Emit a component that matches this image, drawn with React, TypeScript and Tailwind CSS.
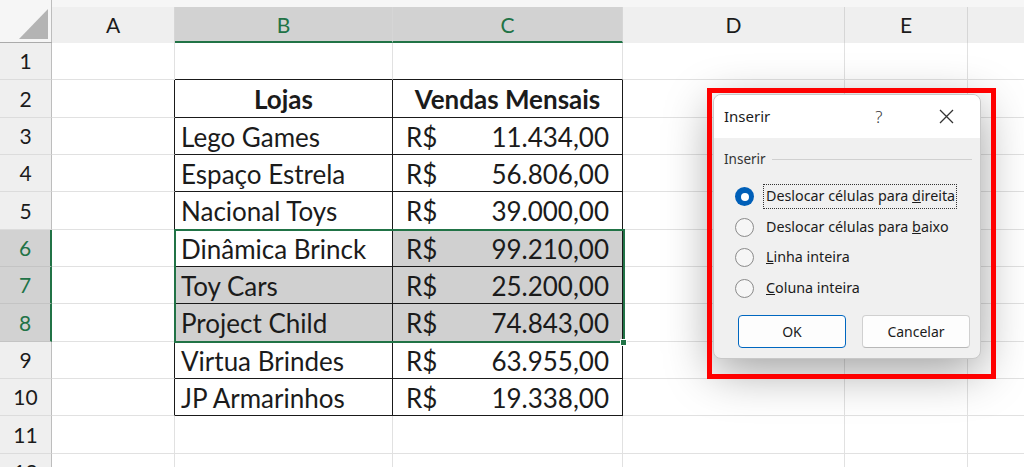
import React from "react";

const cols = [
  { k: "A", w: 123 },
  { k: "B", w: 218 },
  { k: "C", w: 230 },
  { k: "D", w: 222 },
  { k: "E", w: 123 },
  { k: "F", w: 100 },
];

const data: Record<number, [string, string]> = {
  3: ["Lego Games", "11.434,00"],
  4: ["Espaço Estrela", "56.806,00"],
  5: ["Nacional Toys", "39.000,00"],
  6: ["Dinâmica Brinck", "99.210,00"],
  7: ["Toy Cars", "25.200,00"],
  8: ["Project Child", "74.843,00"],
  9: ["Virtua Brindes", "63.955,00"],
  10: ["JP Armarinhos", "19.338,00"],
};

const rows = Array.from({ length: 12 }, (_, i) => i + 1);

function Cell({ r, c, w }: { r: number; c: string; w: number }) {
  const inTable = r >= 2 && r <= 10;
  const rightBlack = inTable && (c === "A" || c === "B" || c === "C");
  const bottomBlack = r >= 1 && r <= 10 && (c === "B" || c === "C");
  const selGray = (r === 7 || r === 8) && c === "B" ? true : r >= 6 && r <= 8 && c === "C";
  const cls = [
    "shrink-0 h-full border-r border-b flex items-center leading-none pt-[2px]",
    rightBlack ? "border-r-[#1a1a1a]" : "border-r-[#e1e1e1]",
    bottomBlack ? "border-b-[#1a1a1a]" : "border-b-[#e1e1e1]",
    selGray ? "bg-[#d0d0d0]" : "bg-white",
  ].join(" ");
  let content: React.ReactNode = null;
  if (r === 2 && c === "B") content = <span className="w-full text-center font-bold">Lojas</span>;
  if (r === 2 && c === "C") content = <span className="w-full text-center font-bold">Vendas Mensais</span>;
  if (data[r] && c === "B") content = <span className="pl-[6px]">{data[r][0]}</span>;
  if (data[r] && c === "C")
    content = (
      <div className="w-full flex justify-between pl-[13px] pr-[13px]">
        <span>R$</span>
        <span>{data[r][1]}</span>
      </div>
    );
  return (
    <div className={cls} style={{ width: w }}>
      {content}
    </div>
  );
}

function Radio({ checked, label }: { checked?: boolean; label: React.ReactNode }) {
  return (
    <div className="flex items-center h-[30.5px] pl-[11px]">
      {checked ? (
        <div className="w-[19px] h-[19px] rounded-full bg-[#005fb8] flex items-center justify-center">
          <div className="w-[8px] h-[8px] rounded-full bg-white" />
        </div>
      ) : (
        <div className="w-[19px] h-[19px] rounded-full border border-[#8a8a8a] bg-[#f6f6f6]" />
      )}
      <div
        className={
          "ml-[10px] text-[14.3px] text-[#1b1b1b] leading-none py-[4px] pl-[2px] pr-[1px] " +
          (checked ? "outline outline-1 outline-dotted outline-[#333]" : "")
        }
      >
        {label}
      </div>
    </div>
  );
}

export default function App() {
  return (
    <div
      className="relative w-[1024px] h-[467px] overflow-hidden bg-white text-[#1b1b1b]"
      style={{ fontFamily: "Lato, 'Noto Sans', sans-serif" }}
    >
      {/* Column header */}
      <div className="flex h-[43px] bg-[#f6f6f6] border-b border-[#ababab]">
        <div className="shrink-0 w-[52px] h-full border-r border-[#bdbdbd] flex items-end justify-end pb-[2px] pr-[2px]">
          <svg width="30" height="31" viewBox="0 0 30 31">
            <polygon points="29,0 29,30 0,30" fill="#b4b4b4" />
          </svg>
        </div>
        {cols.map((col) => {
          const sel = col.k === "B" || col.k === "C";
          return (
            <div
              key={col.k}
              className={
                "shrink-0 mt-[7px] h-[36px] border-r border-[#d6d6d6] flex items-center justify-center text-[21px] " +
                (sel ? "bg-[#d2d2d2] text-[#217346] border-b-2 border-b-[#217346] pt-[2px]" : "bg-[#efefef] text-[#1b1b1b]")
              }
              style={{ width: col.w }}
            >
              {col.k !== "F" ? col.k : ""}
            </div>
          );
        })}
      </div>

      {/* Rows */}
      {rows.map((r) => {
        const selRow = r >= 6 && r <= 8;
        return (
          <div key={r} className="flex h-[37.33px] text-[26px]">
            <div
              className={
                "shrink-0 w-[52px] h-full border-b flex items-center justify-center text-[21px] " +
                (selRow
                  ? "bg-[#d2d2d2] text-[#217346] border-b-[#c4c4c4] border-r-2 border-r-[#217346]"
                  : "bg-[#efefef] text-[#1b1b1b] border-b-[#dcdcdc] border-r border-r-[#bdbdbd]")
              }
            >
              {r}
            </div>
            {cols.map((col) => (
              <Cell key={col.k} r={r} c={col.k} w={col.w} />
            ))}
          </div>
        );
      })}

      {/* Selection border */}
      <div className="absolute left-[174px] top-[229px] w-[451px] h-[114px] border-2 border-[#217346] pointer-events-none" />
      <div className="absolute left-[620px] top-[339px] w-[7px] h-[7px] bg-[#217346] border border-white" />

      {/* Dialog */}
      <div
        className="absolute left-[713px] top-[94px] w-[268px] h-[265px] rounded-[8px] overflow-hidden bg-[#f0f0f0] border border-[#c8c8c8] shadow-[0_12px_48px_rgba(0,0,0,0.38)]"
        style={{ fontFamily: "'Noto Sans', 'Open Sans', sans-serif" }}
      >
        <div className="h-[43px] bg-white flex items-center pl-[10px]">
          <span className="text-[15px] text-[#1b1b1b]">Inserir</span>
          <span className="ml-[105px] text-[17px] text-[#333] font-light">?</span>
          <svg className="ml-[57px]" width="15" height="15" viewBox="0 0 15 15">
            <path d="M1 1 L14 14 M14 1 L1 14" stroke="#333" strokeWidth="1.3" />
          </svg>
        </div>
        <div className="px-[10px] pt-[11px]">
          <div className="flex items-center">
            <span className="text-[13.5px] text-[#333]">Inserir</span>
            <div className="flex-1 ml-[6px] mr-[-2px] h-px bg-[#d0d0d0]" />
          </div>
          <div className="mt-[12px]">
            <Radio
              checked
              label={
                <>
                  Deslocar células para <span className="underline">d</span>ireita
                </>
              }
            />
            <Radio
              label={
                <>
                  Deslocar células para <span className="underline">b</span>aixo
                </>
              }
            />
            <Radio
              label={
                <>
                  <span className="underline">L</span>inha inteira
                </>
              }
            />
            <Radio
              label={
                <>
                  <span className="underline">C</span>oluna inteira
                </>
              }
            />
          </div>
          <div className="flex gap-[16px] mt-[12px] pl-[14px]">
            <div className="w-[108px] h-[33px] rounded-[4px] border border-[#0067c0] bg-[#fdfdfd] flex items-center justify-center text-[14px]">
              OK
            </div>
            <div className="w-[108px] h-[33px] rounded-[4px] border border-[#d0d0d0] border-b-[#b8b8b8] bg-[#fdfdfd] flex items-center justify-center text-[14px]">
              Cancelar
            </div>
          </div>
        </div>
      </div>

      {/* Red annotation box */}
      <div className="absolute left-[707px] top-[88px] w-[289px] h-[291px] border-[5px] border-[#ff0000] pointer-events-none" />
    </div>
  );
}
